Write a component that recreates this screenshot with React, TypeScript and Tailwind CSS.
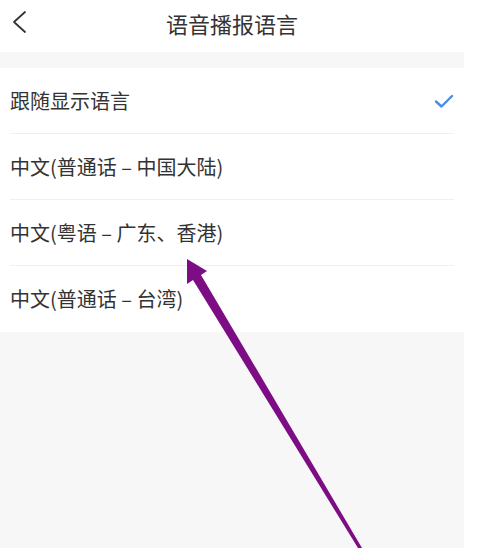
const rows = [
  { label: "跟随显示语言", checked: true },
  { label: "中文(普通话 – 中国大陆)" },
  { label: "中文(粤语 – 广东、香港)" },
  { label: "中文(普通话 – 台湾)" },
];

function BackIcon() {
  return (
    <svg width="18" height="24" viewBox="0 0 18 24" fill="none">
      <path d="M15 2 L4 12 L15 22" stroke="#333" strokeWidth="1.8" strokeLinecap="round" strokeLinejoin="round" />
    </svg>
  );
}

function CheckIcon() {
  return (
    <svg width="20" height="16" viewBox="0 0 20 16" fill="none">
      <path d="M2 8.5 L7.5 13.5 L18 3" stroke="#4a8ee0" strokeWidth="2.4" strokeLinecap="round" strokeLinejoin="round" />
    </svg>
  );
}

function Arrow() {
  return (
    <svg className="pointer-events-none absolute left-0 top-0" width="480" height="548" viewBox="0 0 480 548">
      <polygon points="187,259 207,271 201,275 362,548 358,548 193,280 187,284" fill="#7d0d84" />
    </svg>
  );
}

export default function App() {
  return (
    <div
      className="relative flex h-[548px] w-[480px] overflow-hidden bg-white"
      style={{ fontFamily: '"Noto Sans CJK SC", "Noto Sans", sans-serif' }}
    >
      <div className="flex w-[464px] flex-col">
        <div className="grid h-[52px] grid-cols-[60px_1fr_60px] items-start pt-[10px]">
          <div className="pl-[10px]">
            <BackIcon />
          </div>
          <h1 className="text-center text-[22px] leading-[26px] text-[#333]">语音播报语言</h1>
          <div />
        </div>
        <div className="h-[16px] bg-[#f7f7f7]" />
        <ul className="bg-white">
          {rows.map((r, i) => (
            <li key={r.label} className="px-[10px]">
              <div
                className={
                  "flex h-[66px] items-center justify-between " +
                  (i < rows.length - 1 ? "border-b border-[#f0f0f0]" : "")
                }
              >
                <span className="text-[20px] text-[#333]">{r.label}</span>
                {r.checked && <CheckIcon />}
              </div>
            </li>
          ))}
        </ul>
        <div className="flex-1 bg-[#f7f7f7]" />
      </div>
      <Arrow />
    </div>
  );
}
